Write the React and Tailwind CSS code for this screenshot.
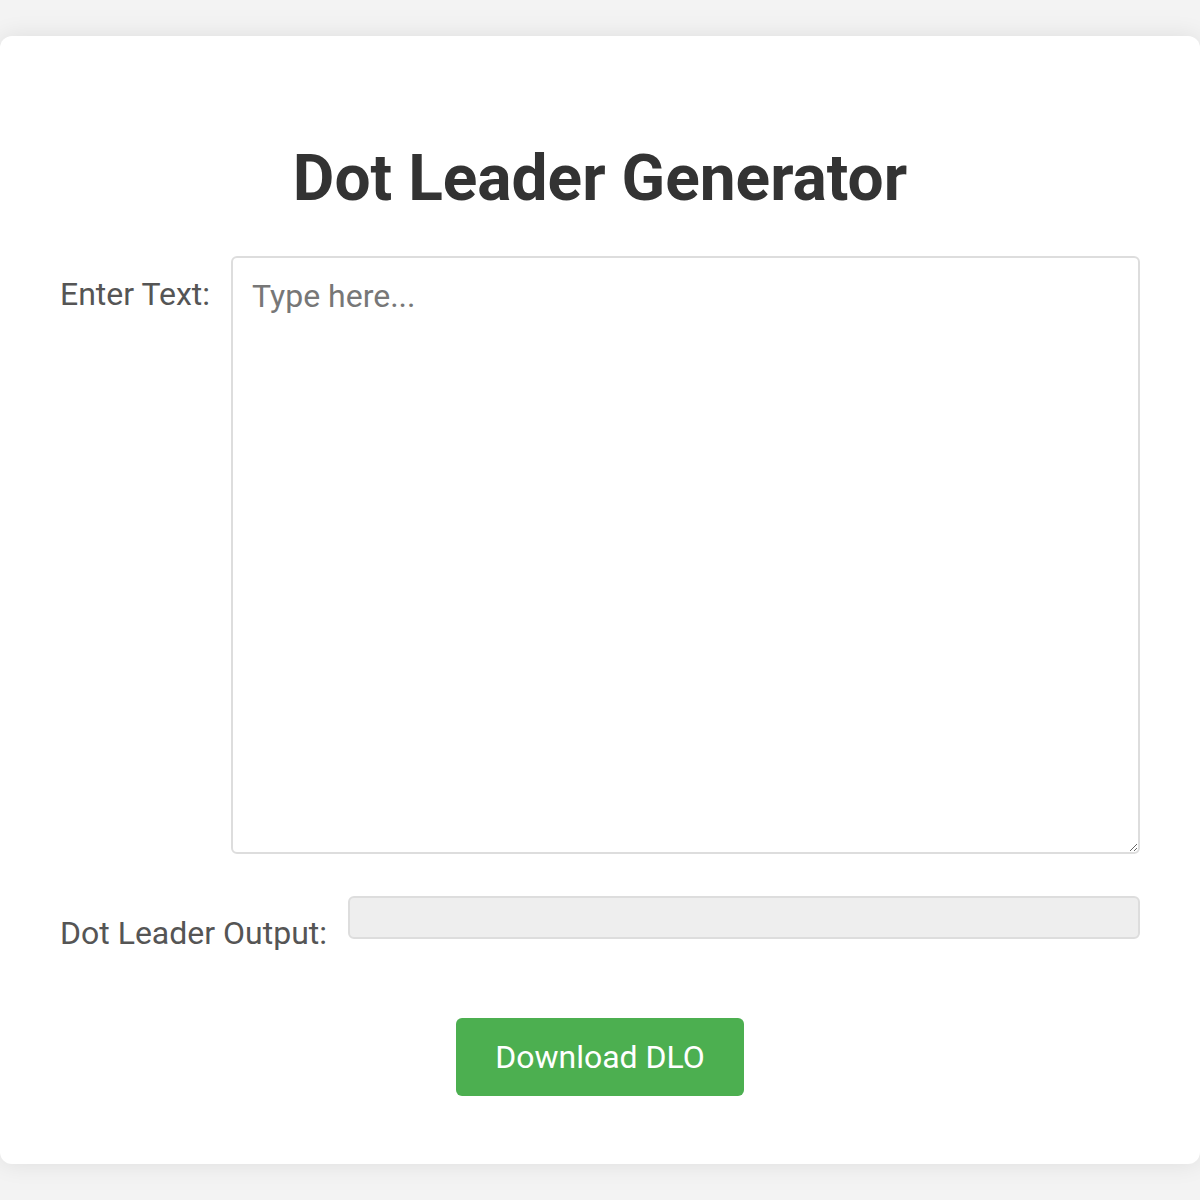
import React, { useState } from 'react';

const App = () => {
    const [text, setText] = useState('');

    return (
        <div className="min-h-[1200px] bg-[#f3f3f3] pt-[36px] font-['Roboto',_'Liberation_Sans',_sans-serif]">
            <div className="bg-white rounded-[12px] shadow-[0_0_24px_rgba(0,0,0,0.09)] px-[60px] pt-[105px] pb-[68px]">

                {/* Heading */}
                <h1 className="text-center text-[64px] font-bold text-[#333] leading-[75px]">
                    Dot Leader Generator
                </h1>

                {/* Input area */}
                <div className="flex items-start gap-[21px] mt-[40px]">
                    <label htmlFor="dl-input" className="text-[32px] text-[#555] mt-[20px] leading-[37px] shrink-0">
                        Enter Text:
                    </label>
                    <textarea
                        id="dl-input"
                        value={text}
                        onChange={(e) => setText(e.target.value)}
                        placeholder="Type here..."
                        className="flex-1 h-[598px] border-2 border-[#ddd] rounded-[6px] px-[19px] pt-[20px] pb-[17px] text-[32px] text-[#333] placeholder:text-[#777] leading-[37px] outline-none"
                    />
                </div>

                {/* Output */}
                <div className="flex items-start gap-[21px] mt-[42px]">
                    <label className="text-[32px] text-[#555] mt-[19px] leading-[37px] shrink-0">
                        Dot Leader Output:
                    </label>
                    <div className="flex-1 h-[43px] bg-[#eee] border-2 border-[#ddd] rounded-[6px]">
                        {text.replace(/\s/g, '.')}
                    </div>
                </div>

                {/* Download */}
                <div className="flex justify-center mt-[66px]">
                    <button className="w-[288px] h-[78px] bg-[#4caf50] text-white text-[32px] rounded-[6px]">
                        Download DLO
                    </button>
                </div>

            </div>
        </div>
    );
};

export default App;
